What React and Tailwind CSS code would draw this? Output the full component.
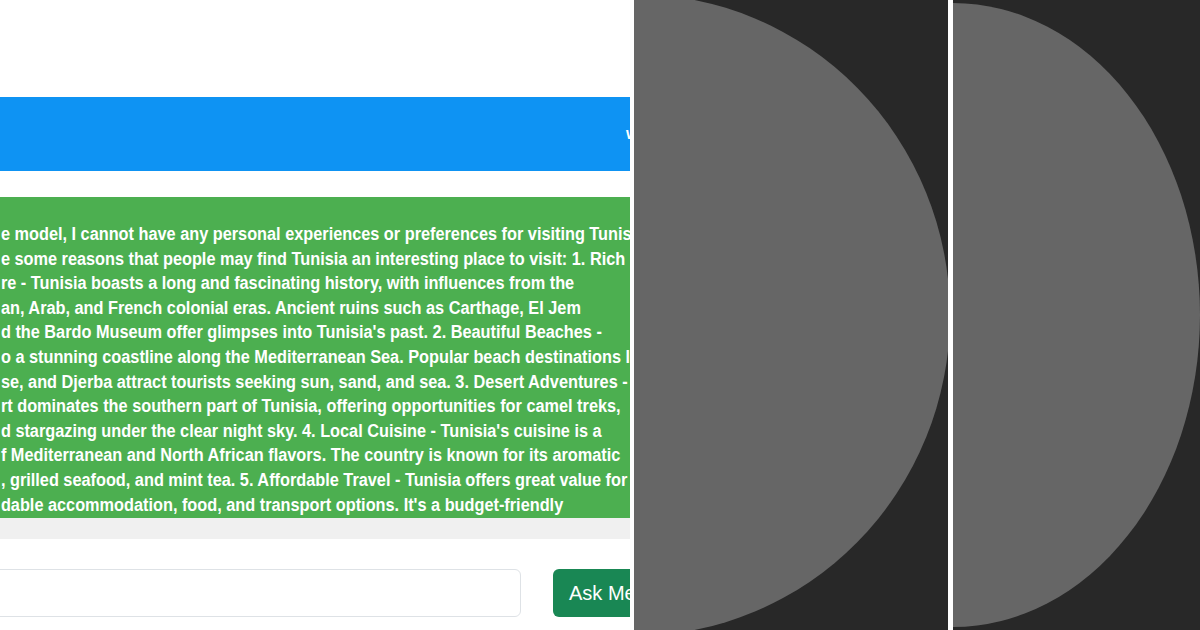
import React from 'react';

const lines = [
  "e model, I cannot have any personal experiences or preferences for visiting Tunisia.",
  "e some reasons that people may find Tunisia an interesting place to visit: 1. Rich",
  "re - Tunisia boasts a long and fascinating history, with influences from the",
  "an, Arab, and French colonial eras. Ancient ruins such as Carthage, El Jem",
  "d the Bardo Museum offer glimpses into Tunisia's past. 2. Beautiful Beaches -",
  "o a stunning coastline along the Mediterranean Sea. Popular beach destinations like",
  "se, and Djerba attract tourists seeking sun, sand, and sea. 3. Desert Adventures -",
  "rt dominates the southern part of Tunisia, offering opportunities for camel treks,",
  "d stargazing under the clear night sky. 4. Local Cuisine - Tunisia's cuisine is a",
  "f Mediterranean and North African flavors. The country is known for its aromatic",
  ", grilled seafood, and mint tea. 5. Affordable Travel - Tunisia offers great value for",
  "dable accommodation, food, and transport options. It's a budget-friendly",
];

function Preview({ width, rx, ry }) {
  // dark slide with a half disc hugging its left edge
  return (
    <div className="h-full bg-[#282828] shrink-0" style={{ width }}>
      <svg width={width} height="630" viewBox={`0 0 ${width} 630`} className="block">
        <ellipse cx="0" cy="315" rx={rx} ry={ry} fill="#666666" />
      </svg>
    </div>
  );
}

export default function App() {
  return (
    <div className="flex w-[1200px] h-[630px] overflow-hidden bg-white font-['Liberation_Sans',Arial,sans-serif]">
      {/* chat page */}
      <div className="w-[634px] shrink-0 flex flex-col">
        <div className="w-[630px] overflow-hidden flex flex-col pt-[97px]">
          <div className="h-[74px] bg-[#0e93f3] overflow-hidden flex items-center">
            <h1 className="pl-[626px] whitespace-nowrap text-white text-[16px] font-bold">welcome</h1>
          </div>

          <div className="mt-[26px] bg-[#f0f0f0] pb-[21px]">
            <div className="bg-[#4caf50] pt-[25px] pb-px text-white font-bold text-[18px] leading-[24.6px] overflow-hidden">
              <div className="origin-left scale-x-[0.905] w-[700px]">
                {lines.map((l, i) => (
                  <div key={i} className="whitespace-nowrap pl-px">{l}</div>
                ))}
              </div>
            </div>
          </div>

          <div className="mt-[30px] flex items-center">
            <input
              className="shrink-0 -ml-[10px] w-[531px] h-[48px] border border-[#dee2e6] rounded-md px-4 text-[20px] outline-none"
              type="text"
            />
            <button className="shrink-0 ml-[32px] h-[48px] px-4 rounded-md bg-[#198754] text-white text-[20px] whitespace-nowrap">
              Ask Me
            </button>
          </div>
        </div>
      </div>

      <Preview width={314} rx={316} ry={321} />
      <div className="w-[5px] shrink-0 bg-white" />
      <Preview width={247} rx={247} ry={312} />
    </div>
  );
}
